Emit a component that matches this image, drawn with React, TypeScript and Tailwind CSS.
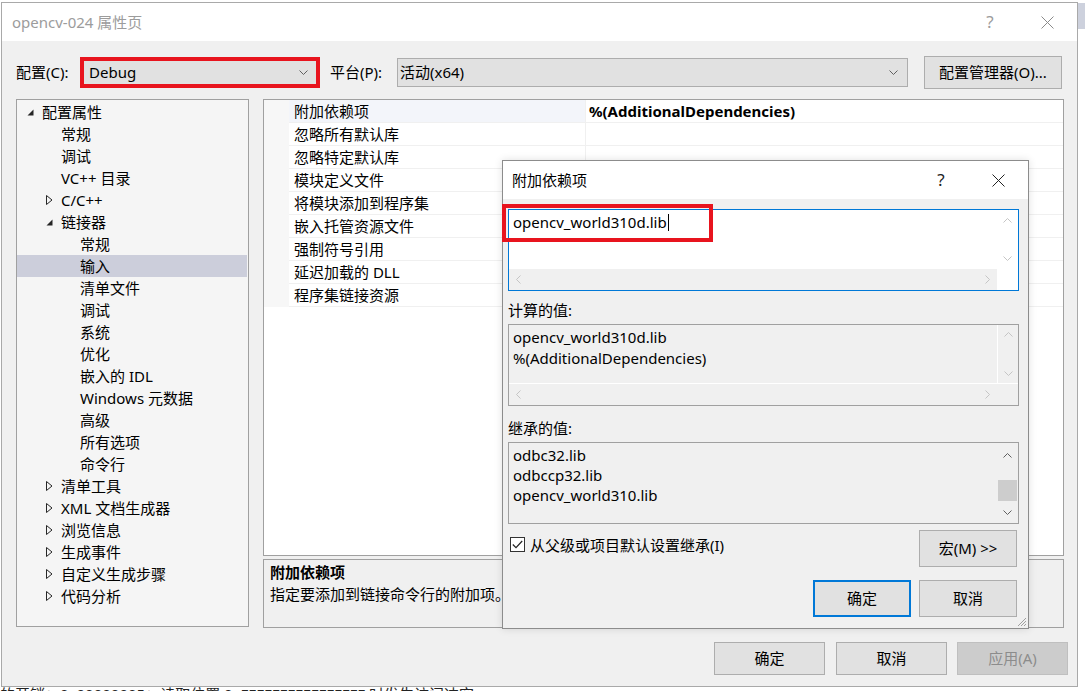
import React from "react";

const F = "font-['Noto_Sans','Noto_Sans_CJK_SC',sans-serif]";

function Chev({ dir, color = "#606060" }: { dir: "up" | "down" | "left" | "right"; color?: string }) {
  if (dir === "down" || dir === "up") {
    const d = dir === "down" ? "M0.5 0.5 L4.5 4.5 L8.5 0.5" : "M0.5 4.5 L4.5 0.5 L8.5 4.5";
    return (
      <svg width="9" height="5" viewBox="0 0 9 5">
        <path d={d} fill="none" stroke={color} strokeWidth="1" />
      </svg>
    );
  }
  const d = dir === "left" ? "M4.5 0.5 L0.5 4.5 L4.5 8.5" : "M0.5 0.5 L4.5 4.5 L0.5 8.5";
  return (
    <svg width="5" height="9" viewBox="0 0 5 9">
      <path d={d} fill="none" stroke={color} strokeWidth="1" />
    </svg>
  );
}

function CloseX({ color }: { color: string }) {
  return (
    <svg width="13" height="13" viewBox="0 0 13 13">
      <path d="M0.5 0.5 L12.5 12.5 M12.5 0.5 L0.5 12.5" stroke={color} strokeWidth="1" fill="none" />
    </svg>
  );
}

function ExpArrow() {
  return (
    <svg width="7" height="7" viewBox="0 0 7 7">
      <polygon points="6.5,0.5 6.5,6.5 0.5,6.5" fill="#262626" />
    </svg>
  );
}

function ColArrow() {
  return (
    <svg width="7" height="10" viewBox="0 0 7 10">
      <polygon points="0.5,0.5 6,5 0.5,9.5" fill="none" stroke="#262626" strokeWidth="1" />
    </svg>
  );
}

type Node = { t: string; lvl: number; exp?: boolean; col?: boolean; sel?: boolean };

const tree: Node[] = [
  { t: "配置属性", lvl: 0, exp: true },
  { t: "常规", lvl: 1 },
  { t: "调试", lvl: 1 },
  { t: "VC++ 目录", lvl: 1 },
  { t: "C/C++", lvl: 1, col: true },
  { t: "链接器", lvl: 1, exp: true },
  { t: "常规", lvl: 2 },
  { t: "输入", lvl: 2, sel: true },
  { t: "清单文件", lvl: 2 },
  { t: "调试", lvl: 2 },
  { t: "系统", lvl: 2 },
  { t: "优化", lvl: 2 },
  { t: "嵌入的 IDL", lvl: 2 },
  { t: "Windows 元数据", lvl: 2 },
  { t: "高级", lvl: 2 },
  { t: "所有选项", lvl: 2 },
  { t: "命令行", lvl: 2 },
  { t: "清单工具", lvl: 1, col: true },
  { t: "XML 文档生成器", lvl: 1, col: true },
  { t: "浏览信息", lvl: 1, col: true },
  { t: "生成事件", lvl: 1, col: true },
  { t: "自定义生成步骤", lvl: 1, col: true },
  { t: "代码分析", lvl: 1, col: true },
];

const padCls = ["pl-[10px]", "pl-[29px]", "pl-[48px]"];

const props = [
  "附加依赖项",
  "忽略所有默认库",
  "忽略特定默认库",
  "模块定义文件",
  "将模块添加到程序集",
  "嵌入托管资源文件",
  "强制符号引用",
  "延迟加载的 DLL",
  "程序集链接资源",
];

function Btn({ children, className = "" }: { children: React.ReactNode; className?: string }) {
  return (
    <div className={`flex items-center justify-center bg-[#e1e1e1] border border-[#adadad] text-[15px] text-black ${className}`}>
      {children}
    </div>
  );
}

export default function App() {
  return (
    <div className={`relative w-[1085px] h-[691px] overflow-hidden bg-white ${F} text-[15px] text-black`}>
      {/* background desktop bits */}
      <div className="absolute left-0 top-[684px] whitespace-nowrap text-[15px] leading-[20px] text-[#222]">
        的开销：0x00000005：读取位置 0xFFFFFFFFFFFFFFFF 时发生访问冲突。
      </div>
      <div className="absolute left-[1078px] top-[3px] w-[7px] h-[26px] bg-[#cdd1dd]" />

      {/* main window */}
      <div className="relative ml-[1px] mt-[2px] w-[1077px] h-[685px] border border-[#a9a9a9] flex flex-col bg-[#f0f0f0]">
        {/* title bar */}
        <div className="h-[38px] bg-white flex items-center pl-[10px] shrink-0">
          <span className="text-[#9c9c9c] text-[15px]">opencv-024 属性页</span>
          <div className="ml-auto flex items-center">
            <span className="w-[30px] text-center text-[#9c9c9c] text-[17px]">?</span>
            <span className="w-[57px] flex justify-center ml-[14px] mr-[1px]">
              <CloseX color="#8a8a8a" />
            </span>
          </div>
        </div>

        {/* body */}
        <div className="flex-1 flex flex-col">
          {/* config row */}
          <div className="mt-[15px] h-[33px] flex items-center pl-[14px] pr-[15px]">
            <span className="w-[64px]">配置(C):</span>
            <div className="w-[240px] h-[31px] border-[4px] border-[#e8141e] bg-[#e1e1e1] flex items-center pl-[5px] pr-[8px]">
              <span>Debug</span>
              <span className="ml-auto flex">
                <Chev dir="down" />
              </span>
            </div>
            <span className="ml-[10px] w-[67px]">平台(P):</span>
            <div className="flex-1 h-[29px] border border-[#adadad] bg-[#e1e1e1] flex items-center pl-[2px] pr-[9px]">
              <span>活动(x64)</span>
              <span className="ml-auto flex">
                <Chev dir="down" />
              </span>
            </div>
            <Btn className="ml-[16px] w-[138px] h-[33px]">配置管理器(O)...</Btn>
          </div>

          {/* main area */}
          <div className="mt-[10px] h-[529px] flex pl-[14px] pr-[13px] gap-[14px]">
            {/* tree */}
            <div className="w-[233px] h-[528px] border border-[#a0a0a0] bg-[#f5f5f5] flex flex-col pt-[1px]">
              {tree.map((n, i) => (
                <div
                  key={i}
                  className={`h-[22px] flex items-center ${padCls[n.lvl]} ${n.sel ? "bg-[#cccedb] mr-[1px]" : ""}`}
                >
                  <span className="w-[15px] flex items-center">
                    {n.exp ? <ExpArrow /> : n.col ? <ColArrow /> : null}
                  </span>
                  <span className="leading-[20px]">{n.t}</span>
                </div>
              ))}
            </div>

            {/* right panel */}
            <div className="flex-1 flex flex-col gap-[3px]">
              <div className="h-[457px] border border-[#a0a0a0] bg-white flex flex-col">
                {props.map((p, i) => (
                  <div key={i} className="h-[23px] flex">
                    <div className="w-[25px] bg-[#f7f7f7]" />
                    <div
                      className={`w-[297px] pl-[5px] flex items-center border-b border-r border-[#f0f0f0] ${i === 0 ? "bg-[#f3f5fa]" : ""}`}
                    >
                      {p}
                    </div>
                    <div className="flex-1 pl-[3px] flex items-center border-b border-[#f0f0f0]">
                      {i === 0 ? <span className="font-bold">%(AdditionalDependencies)</span> : null}
                    </div>
                  </div>
                ))}
              </div>
              <div className="flex-1 border border-[#a0a0a0] bg-[#f0f0f0] pl-[6px] pt-[1px] leading-[22px]">
                <div className="font-bold">附加依赖项</div>
                <div>指定要添加到链接命令行的附加项。</div>
              </div>
            </div>
          </div>

          {/* bottom buttons */}
          <div className="mt-[14px] flex justify-end pr-[9px]">
            <Btn className="w-[111px] h-[33px]">确定</Btn>
            <Btn className="w-[111px] h-[33px] ml-[11px]">取消</Btn>
            <Btn className="w-[111px] h-[33px] ml-[10px] !bg-[#cccccc] !border-[#bfbfbf] !text-[#8c8c8c]">应用(A)</Btn>
          </div>
        </div>
      </div>

      {/* modal dialog */}
      <div className="absolute left-[502px] top-[160px] w-[527px] h-[469px] border border-[#8c8c8c] bg-[#f0f0f0] flex flex-col shadow-[0_0_8px_rgba(0,0,0,0.12)]">
        <div className="h-[38px] bg-white flex items-center pl-[9px] shrink-0">
          <span>附加依赖项</span>
          <div className="ml-auto flex items-center pr-[15px]">
            <span className="w-[30px] text-center text-[17px] text-[#222]">?</span>
            <span className="w-[30px] flex justify-center ml-[27px]">
              <CloseX color="#222" />
            </span>
          </div>
        </div>

        <div className="flex-1 flex flex-col pl-[5px] pr-[9px] pt-[10px]">
          {/* edit box */}
          <div className="h-[82px] border border-[#0078d7] bg-white flex flex-col">
            <div className="flex-1 flex">
              <div className="flex-1 pl-[4px] pt-[2px] leading-[20px]">
                <span>opencv_world310d.lib</span>
                <span className="inline-block w-[1px] h-[17px] bg-black align-[-3px] ml-[1px]" />
              </div>
              <div className="w-[21px] flex flex-col items-center justify-between py-[8px]">
                <Chev dir="up" color="#c5c5c5" />
                <Chev dir="down" color="#c5c5c5" />
              </div>
            </div>
            <div className="h-[21px] flex">
              <div className="flex-1 bg-[#f0f0f0] flex items-center justify-between px-[7px]">
                <Chev dir="left" color="#c5c5c5" />
                <Chev dir="right" color="#c5c5c5" />
              </div>
              <div className="w-[21px] bg-white" />
            </div>
          </div>

          <div className="h-[33px] pt-[9px] leading-[20px]">计算的值:</div>

          {/* computed box */}
          <div className="h-[82px] border border-[#a0a0a0] bg-[#f0f0f0] flex flex-col">
            <div className="flex-1 flex border-b border-white">
              <div className="flex-1 pl-[4px] pt-[2px] leading-[20.5px]">
                <div>opencv_world310d.lib</div>
                <div>%(AdditionalDependencies)</div>
              </div>
              <div className="w-[21px] border-l border-white flex flex-col items-center justify-between py-[7px]">
                <Chev dir="up" color="#c5c5c5" />
                <Chev dir="down" color="#c5c5c5" />
              </div>
            </div>
            <div className="h-[21px] flex">
              <div className="flex-1 flex items-center justify-between px-[7px]">
                <Chev dir="left" color="#c5c5c5" />
                <Chev dir="right" color="#c5c5c5" />
              </div>
              <div className="w-[21px]" />
            </div>
          </div>

          <div className="h-[36px] pt-[12px] leading-[20px]">继承的值:</div>

          {/* inherited box */}
          <div className="h-[82px] border border-[#a0a0a0] bg-[#f0f0f0] flex">
            <div className="flex-1 pl-[4px] pt-[2px] leading-[20px]">
              <div>odbc32.lib</div>
              <div>odbccp32.lib</div>
              <div>opencv_world310.lib</div>
            </div>
            <div className="w-[21px] flex flex-col items-center">
              <div className="h-[25px] flex items-center">
                <Chev dir="up" color="#606060" />
              </div>
              <div className="h-[12px]" />
              <div className="w-[19px] h-[21px] bg-[#cdcdcd]" />
              <div className="flex-1 flex items-center">
                <Chev dir="down" color="#606060" />
              </div>
            </div>
          </div>

          {/* bottom of dialog */}
          <div className="flex-1 flex">
            <div className="flex-1 pt-[12px] pl-[2px] flex items-start">
              <div className="flex items-center h-[17px]">
                <div className="w-[15px] h-[15px] border border-[#333] bg-white flex items-center justify-center">
                  <svg width="11" height="9" viewBox="0 0 11 9">
                    <path d="M0.8 4.5 L4 7.7 L10.2 1" fill="none" stroke="#222" strokeWidth="1.2" />
                  </svg>
                </div>
                <span className="ml-[5px] leading-[20px]">从父级或项目默认设置继承(I)</span>
              </div>
            </div>
            <div className="pt-[6px] mr-[2px] flex flex-col items-end">
              <Btn className="w-[98px] h-[37px]">宏(M) &gt;&gt;</Btn>
              <div className="flex mt-[13px] gap-[8px]">
                <div className="w-[98px] h-[37px] flex items-center justify-center bg-[#e1e1e1] border-[2px] border-[#0078d7]">
                  确定
                </div>
                <Btn className="w-[98px] h-[37px]">取消</Btn>
              </div>
            </div>
          </div>
        </div>

        {/* size grip */}
        <svg className="absolute right-[1px] bottom-[1px]" width="11" height="11" viewBox="0 0 11 11">
          <path d="M10 2 L2 10 M10 5 L5 10 M10 8 L8 10" stroke="#a0a0a0" strokeWidth="1" />
        </svg>
      </div>

      {/* red highlight around edit text */}
      <div className="absolute left-[502px] top-[204px] w-[211px] h-[38px] border-[4px] border-[#e8141e]" />
    </div>
  );
}
